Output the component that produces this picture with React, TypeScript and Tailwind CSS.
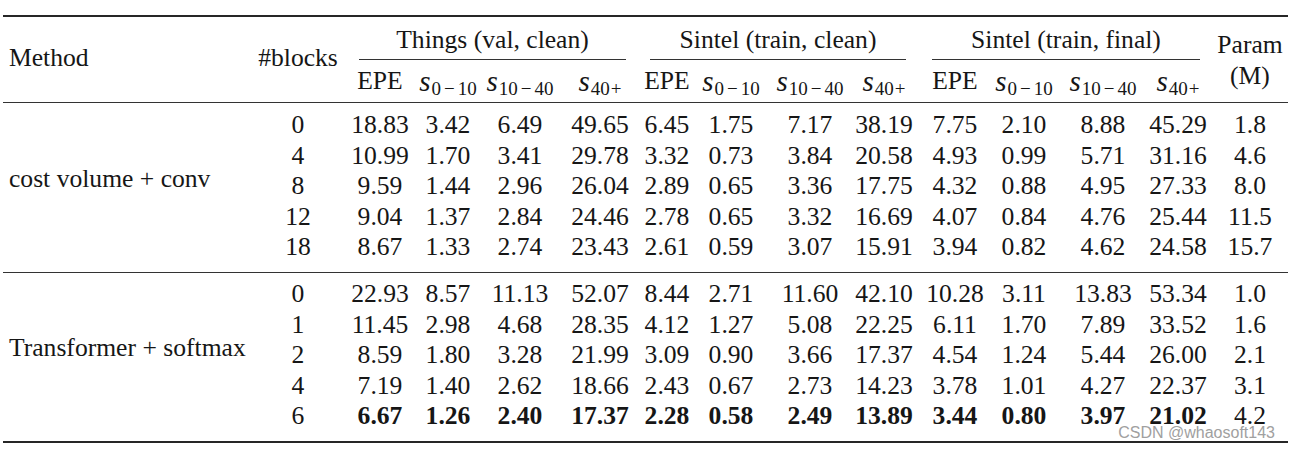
import React from "react";

const COLS =
  "grid grid-cols-[253px_84px_80px_56px_88px_72px_62px_66px_92px_56px_86px_52px_106px_44px_88px]";

type Row = { blocks: string; vals: string[]; param: string; bold?: boolean };

const GROUPS: { label: string; rows: Row[] }[] = [
  {
    label: "cost volume + conv",
    rows: [
      { blocks: "0", vals: ["18.83", "3.42", "6.49", "49.65", "6.45", "1.75", "7.17", "38.19", "7.75", "2.10", "8.88", "45.29"], param: "1.8" },
      { blocks: "4", vals: ["10.99", "1.70", "3.41", "29.78", "3.32", "0.73", "3.84", "20.58", "4.93", "0.99", "5.71", "31.16"], param: "4.6" },
      { blocks: "8", vals: ["9.59", "1.44", "2.96", "26.04", "2.89", "0.65", "3.36", "17.75", "4.32", "0.88", "4.95", "27.33"], param: "8.0" },
      { blocks: "12", vals: ["9.04", "1.37", "2.84", "24.46", "2.78", "0.65", "3.32", "16.69", "4.07", "0.84", "4.76", "25.44"], param: "11.5" },
      { blocks: "18", vals: ["8.67", "1.33", "2.74", "23.43", "2.61", "0.59", "3.07", "15.91", "3.94", "0.82", "4.62", "24.58"], param: "15.7" },
    ],
  },
  {
    label: "Transformer + softmax",
    rows: [
      { blocks: "0", vals: ["22.93", "8.57", "11.13", "52.07", "8.44", "2.71", "11.60", "42.10", "10.28", "3.11", "13.83", "53.34"], param: "1.0" },
      { blocks: "1", vals: ["11.45", "2.98", "4.68", "28.35", "4.12", "1.27", "5.08", "22.25", "6.11", "1.70", "7.89", "33.52"], param: "1.6" },
      { blocks: "2", vals: ["8.59", "1.80", "3.28", "21.99", "3.09", "0.90", "3.66", "17.37", "4.54", "1.24", "5.44", "26.00"], param: "2.1" },
      { blocks: "4", vals: ["7.19", "1.40", "2.62", "18.66", "2.43", "0.67", "2.73", "14.23", "3.78", "1.01", "4.27", "22.37"], param: "3.1" },
      { blocks: "6", vals: ["6.67", "1.26", "2.40", "17.37", "2.28", "0.58", "2.49", "13.89", "3.44", "0.80", "3.97", "21.02"], param: "4.2", bold: true },
    ],
  },
];

// s with a math-style subscript
function S({ children }: { children: React.ReactNode }) {
  return (
    <span className="inline-flex items-baseline">
      <span className="text-[29px] italic">s</span>
      <span className="relative top-[4px] ml-[1px] text-[19px]">{children}</span>
    </span>
  );
}

function SubHeads() {
  return (
    <>
      <div className="flex items-center justify-center">EPE</div>
      <div className="flex items-center justify-center">
        <S>0<span className="mx-[3px]">−</span>10</S>
      </div>
      <div className="flex items-center justify-center">
        <S>10<span className="mx-[3px]">−</span>40</S>
      </div>
      <div className="flex items-center justify-center">
        <S>40<span className="ml-[1px]">+</span></S>
      </div>
    </>
  );
}

function Group({ label, rows, pt }: { label: string; rows: Row[]; pt: string }) {
  return (
    <div className={`${COLS} auto-rows-[30.5px] pb-[9.5px] ${pt}`}>
      <div className="row-span-5 flex items-center pb-[14px] pl-[6px] whitespace-nowrap">{label}</div>
      {rows.map((r) => (
        <React.Fragment key={r.blocks}>
          <div className="flex items-center justify-center">{r.blocks}</div>
          {r.vals.map((v, i) => (
            <div key={i} className={r.bold ? "flex items-center justify-center font-bold" : "flex items-center justify-center"}>
              {v}
            </div>
          ))}
          <div className="flex items-center justify-center pl-[12px]">{r.param}</div>
        </React.Fragment>
      ))}
    </div>
  );
}

export default function App() {
  return (
    <div className="relative h-[450px] w-[1290px] overflow-hidden bg-white font-['Liberation_Serif','Times_New_Roman',serif] text-[25.6px] leading-none text-[#161616]">
      <div className="ml-[3px] w-[1285px] pt-[15px]">
        <div className="h-[2px] bg-[#262626]" />

        <div className={`${COLS} grid-rows-[43px_42px] whitespace-nowrap`}>
          <div className="row-span-2 flex items-center pb-[3px] pl-[6px]">Method</div>
          <div className="row-span-2 flex items-center justify-center pb-[3px]">#blocks</div>
          <div className="col-span-4 flex flex-col justify-end">
            <div className="ml-[19px] mr-[10px] text-center leading-[30px]">Things (val, clean)</div>
            <div className="ml-[19px] mr-[10px] mt-[4px] h-px bg-[#333]" />
          </div>
          <div className="col-span-4 flex flex-col justify-end">
            <div className="ml-[14px] mr-[6px] text-center leading-[30px]">Sintel (train, clean)</div>
            <div className="ml-[14px] mr-[6px] mt-[4px] h-px bg-[#333]" />
          </div>
          <div className="col-span-4 flex flex-col justify-end">
            <div className="ml-[20px] text-center leading-[30px]">Sintel (train, final)</div>
            <div className="ml-[20px] mt-[4px] h-px bg-[#333]" />
          </div>
          <div className="row-span-2 flex flex-col items-center justify-center pl-[12px] leading-[31px]">
            <span>Param</span>
            <span>(M)</span>
          </div>
          <SubHeads />
          <SubHeads />
          <SubHeads />
        </div>

        <div className="h-px bg-[#333]" />
        <Group label={GROUPS[0].label} rows={GROUPS[0].rows} pt="pt-[7px]" />
        <div className="h-px bg-[#333]" />
        <Group label={GROUPS[1].label} rows={GROUPS[1].rows} pt="pt-[6px]" />
        <div className="h-[2px] bg-[#262626]" />
      </div>

      <div className="absolute right-[15px] top-[425px] font-['Liberation_Sans',Arial,sans-serif] text-[16px] leading-[16px] text-[#a0a0a0]">
        CSDN @whaosoft143
      </div>
    </div>
  );
}
